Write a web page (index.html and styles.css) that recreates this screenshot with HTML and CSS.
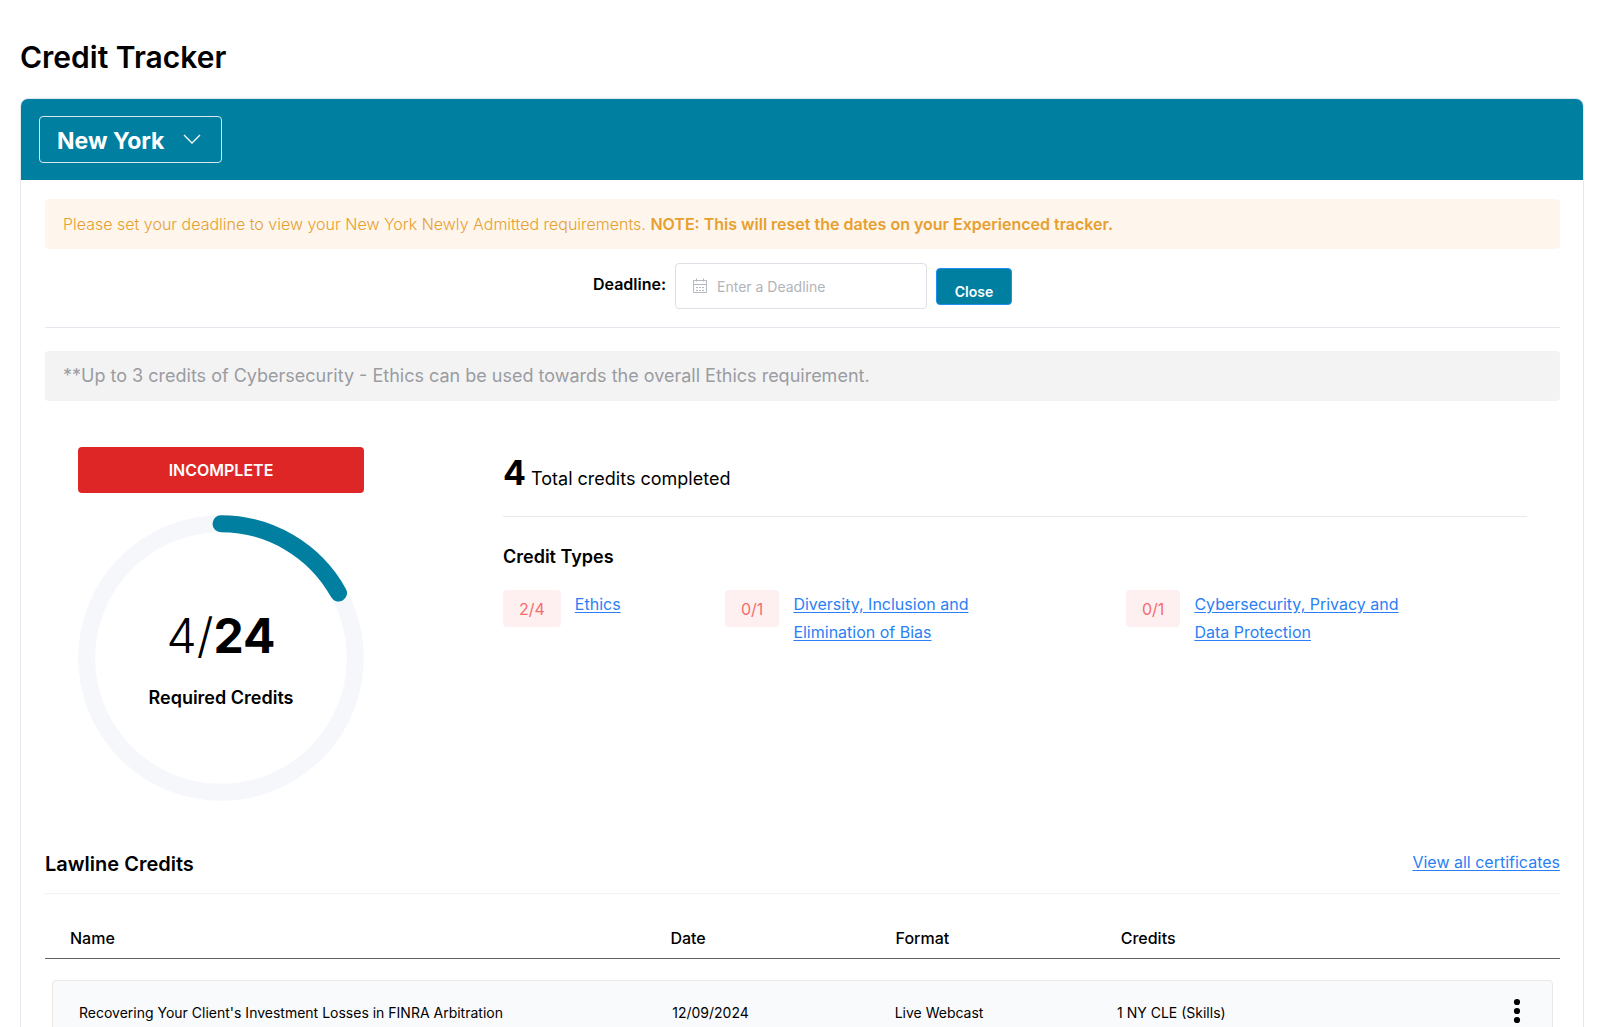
FILE: index.html
```html
<!DOCTYPE html>
<html lang="en">
<head>
  <meta charset="UTF-8">
  <meta name="viewport" content="width=device-width, initial-scale=1">
  <title>Credit Tracker</title>
  <link rel="stylesheet" href="styles.css">
</head>
<body>

  <main class="page">
    <h1>Credit Tracker</h1>

    <div class="card">
      <div class="card-header">
        <div class="state-select">
          <select aria-label="State">
            <option>New York</option>
            <option>New Jersey</option>
          </select>
          <svg class="chevron" width="18" height="10" viewBox="0 0 18 10" aria-hidden="true">
            <path d="M1 1l8 8 8-8" fill="none" stroke="#fff" stroke-width="1.3"/>
          </svg>
        </div>
      </div>

      <div class="card-body">
        <p class="alert warning">Please set your deadline to view your New York Newly Admitted requirements. <strong>NOTE: This will reset the dates on your Experienced tracker.</strong></p>

        <form class="deadline">
          <label for="deadline">Deadline:</label>
          <div class="date-input">
            <svg width="16" height="16" viewBox="0 0 16 16" aria-hidden="true">
              <path d="M1.5 2.5h13v12h-13zM1.5 6.5h13M4.5 .5v3M11.500 .5v3" fill="none" stroke="#b4b8c0"/>
              <path d="M4 9.500h2M7 9.500h2M10 9.500h2M4 12.500h2M7 12.500h2M10 12.500h2" fill="none" stroke="#b4b8c0"/>
            </svg>
            <input id="deadline" type="text" placeholder="Enter a Deadline">
          </div>
          <button type="button" class="close-btn">Close</button>
        </form>

        <p class="alert info">**Up to 3 credits of Cybersecurity - Ethics can be used towards the overall Ethics requirement.</p>

        <section class="summary">
          <div class="progress">
            <div class="status">INCOMPLETE</div>
            <div class="ring">
              <svg viewBox="0 0 286 286" aria-hidden="true">
                <circle cx="143" cy="143" r="134.3" fill="none" stroke="#f5f7fb" stroke-width="17"/>
                <path d="M143 8.7A134.3 134.3 0 0 1 260.5 78" fill="none" stroke="#007fa0" stroke-width="17" stroke-linecap="round"/>
              </svg>
              <div class="ring-text">
                <div class="ring-count">4/<strong>24</strong></div>
                <div class="ring-label">Required Credits</div>
              </div>
            </div>
          </div>

          <div class="details">
            <p class="total"><strong>4</strong> Total credits completed</p>
            <h3>Credit Types</h3>
            <ul class="types">
              <li><span class="badge">2/4</span><a href="#">Ethics</a></li>
              <li><span class="badge">0/1</span><a href="#">Diversity, Inclusion and<br>Elimination of Bias</a></li>
              <li><span class="badge">0/1</span><a href="#">Cybersecurity, Privacy and<br>Data Protection</a></li>
            </ul>
          </div>
        </section>

        <div class="section-head">
          <h2>Lawline Credits</h2>
          <a href="#">View all certificates</a>
        </div>

        <table>
          <thead>
            <tr><th>Name</th><th>Date</th><th>Format</th><th>Credits</th></tr>
          </thead>
          <tbody>
            <tr>
              <td>Recovering Your Client's Investment Losses in FINRA Arbitration</td>
              <td>12/09/2024</td>
              <td>Live Webcast</td>
              <td>1 NY CLE (Skills)</td>
              <td class="actions">
                <button type="button" class="more" aria-label="More options">
                  <svg width="8" height="26" viewBox="0 0 8 26" aria-hidden="true">
                    <circle cx="4" cy="4" r="3.1"/><circle cx="4" cy="13" r="3.1"/><circle cx="4" cy="22" r="3.1"/>
                  </svg>
                </button>
              </td>
            </tr>
          </tbody>
        </table>
      </div>
    </div>
  </main>

</body>
</html>
```

FILE: styles.css
```css
* { box-sizing: border-box; }

body {
  margin: 0;
  height: 100vh;
  overflow: hidden;
  font-family: Inter, "Liberation Sans", sans-serif;
  font-size: 16px;
  font-weight: 400;
  color: #000;
  background: #fff;
}

h1, h2, h3, p, ul { margin: 0; padding: 0; }

a { color: #2a7ff5; text-underline-offset: 2px; }

.page { padding: 39px 16px 0 20px; }

h1 {
  font-size: 30px;
  line-height: 36px;
  font-weight: 600;
  margin-bottom: 23px;
}

.card {
  border: 1px solid #e4e7ed;
  border-radius: 8px;
  overflow: hidden;
}

.card-header {
  background: #007fa0;
  padding: 17px 18px;
}

.state-select {
  position: relative;
  width: 183px;
}
.state-select select {
  appearance: none;
  display: block;
  width: 100%;
  height: 47px;
  padding: 2px 17px 0;
  border: 1px solid #d5e8ee;
  border-radius: 4px;
  background: transparent;
  color: #fff;
  font: bold 23px Inter, "Liberation Sans", sans-serif;
}
.chevron {
  position: absolute;
  right: 21px;
  top: 18px;
  pointer-events: none;
}

.card-body { padding: 19px 23px 24px 24px; }

.alert {
  padding: 0 18px;
  line-height: 50px;
  border-radius: 4px;
}
.warning { background: #fef5ec; color: #e6a030; font-weight: 350; }
.warning strong { font-weight: 600; }
.info { background: #f3f3f3; color: #9a9ca2; font-size: 18px; }

.deadline {
  display: flex;
  justify-content: center;
  align-items: center;
  gap: 9px;
  padding: 14px 0 18px;
  margin-bottom: 23px;
  border-bottom: 1px solid #e4e7ed;
}
.deadline label { font-weight: 600; padding-bottom: 4px; }

.date-input {
  display: flex;
  align-items: center;
  gap: 9px;
  width: 252px;
  height: 46px;
  padding: 0 16px;
  border: 1px solid #dcdfe6;
  border-radius: 4px;
}
.date-input input {
  flex: 1;
  min-width: 0;
  border: none;
  outline: none;
  padding: 0;
  font: 400 14px Inter, "Liberation Sans", sans-serif;
}
.date-input input::placeholder { color: #b2b4ba; }

.close-btn {
  width: 76px;
  height: 37px;
  padding: 11px 0 0;
  border: 1px solid #1d8ff0;
  border-radius: 4px;
  background: #007fa0;
  color: #fff;
  font: 600 14px Inter, "Liberation Sans", sans-serif;
}

.summary {
  display: grid;
  grid-template-columns: 425fr 1024fr;
  padding: 46px 33px 0;
}

.progress { width: 286px; }
.details { min-width: 0; }

.status {
  background: #de2626;
  color: #fff;
  font-weight: 600;
  line-height: 46px;
  text-align: center;
  border-radius: 4px;
  margin-bottom: 22px;
}

.ring { display: grid; }
.ring svg, .ring-text { grid-area: 1 / 1; }
.ring svg { width: 100%; }
.ring-text { text-align: center; padding-top: 94px; }
.ring-count {
  font-size: 48px;
  line-height: 54px;
  font-weight: 300;
}
.ring-count strong { font-weight: 700; }
.ring-label {
  font-size: 18px;
  line-height: 24px;
  font-weight: 600;
  margin-top: 23px;
}

.total {
  font-size: 18px;
  line-height: 52px;
  padding-bottom: 11px;
  border-bottom: 1px solid #e9e9eb;
}
.total strong { font-size: 34px; font-weight: 700; }

h3 {
  font-size: 18px;
  line-height: 24px;
  font-weight: 600;
  margin: 28px 0 21px;
}

.types {
  display: grid;
  grid-template-columns: 222fr 401fr 401fr;
  list-style: none;
}
.types li { display: flex; align-items: flex-start; gap: 14px; }
.types a { line-height: 28px; }
.badge {
  padding: 2px 16px 0;
  line-height: 35px;
  border-radius: 4px;
  background: #fef0f0;
  color: #f56c6c;
}

.section-head {
  display: flex;
  justify-content: space-between;
  margin-top: 48px;
  padding-bottom: 14px;
  border-bottom: 1px solid #f2f3f5;
  line-height: 26px;
}
h2 { font-size: 20px; line-height: 30px; font-weight: 600; }

/* rows are grids so that each one can be a rounded box */
table, thead, tbody { display: block; }
tr {
  display: grid;
  grid-template-columns: 40fr 15fr 15fr 15fr 15fr;
}
th, td { padding: 0 18px; text-align: left; }
thead {
  margin-top: 29px;
  padding: 0 7px 5px;
  border-bottom: 1px solid #606266;
}
th { font-size: 16px; font-weight: 500; line-height: 30px; }
tbody { padding: 21px 7px 0; }
tbody tr {
  padding: 0 8px;
  border: 1px solid #ebe7e5;
  border-radius: 4px;
  background: #f9fafc;
}
td { font-size: 14px; font-weight: 400; line-height: 64px; }

td.actions { text-align: right; line-height: 0; padding-right: 23px; }
.more {
  margin-top: 17px;
  padding: 0;
  border: none;
  background: none;
}
```
